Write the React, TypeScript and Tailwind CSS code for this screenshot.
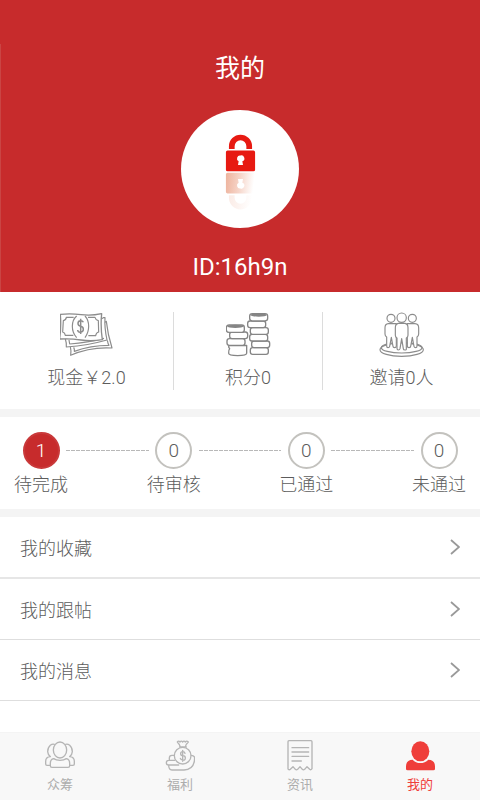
const stats = [
  { label: "现金￥2.0", icon: <CashIcon /> },
  { label: "积分0", icon: <CoinsIcon /> },
  { label: "邀请0人", icon: <PeopleIcon /> },
];

const steps = [
  { label: "待完成", count: 1, active: true },
  { label: "待审核", count: 0, active: false },
  { label: "已通过", count: 0, active: false },
  { label: "未通过", count: 0, active: false },
];

const rows = ["我的收藏", "我的跟帖", "我的消息"];

const tabs = [
  { label: "众筹", icon: <CrowdIcon />, active: false },
  { label: "福利", icon: <WelfareIcon />, active: false },
  { label: "资讯", icon: <NewsIcon />, active: false },
  { label: "我的", icon: <MineIcon />, active: true },
];

const shackle = "M207 327v-8a34 34 0 0 1 69 0v8h-17v-8a17 17 0 0 0-35 0v8z";
const lockBody =
  "M203 332h77q5 0 5 5v52q0 5-5 5h-77q-5 0-5-5v-52q0-5 5-5zM241 347a9 9 0 0 0-5 17l-2 11h15l-2-11a9 9 0 0 0-6-17z";

function LockIcon() {
  return (
    <svg viewBox="64 211 352 352" className="size-full" aria-hidden="true">
      <defs>
        <linearGradient id="reflection" x1="198" y1="380" x2="282" y2="370" gradientUnits="userSpaceOnUse">
          <stop offset="0" stopColor="#eeb49e" />
          <stop offset="0.5" stopColor="#f6d5c9" />
          <stop offset="1" stopColor="#ffffff" />
        </linearGradient>
      </defs>
      <g fill="#e71a12" fillRule="evenodd">
        <path d={shackle} />
        <path d={lockBody} />
      </g>
      <g fill="url(#reflection)" fillRule="evenodd" transform="translate(0 792) scale(1 -1)">
        <path d={shackle} opacity="0.3" />
        <path d={lockBody} />
      </g>
    </svg>
  );
}

function CashIcon() {
  return (
    <svg viewBox="60 38 162 135" className="h-[45px] w-[54px]" fill="none" stroke="#8c8c8c" strokeWidth="3.5" strokeLinejoin="round" aria-hidden="true">
      <path fill="#fff" d="M199 66q4 38 17 80-66-4-124 22 2-14-1-27z" />
      <path d="M101 144q3 5 2 12 48-18 104-18-3-4-5-15" />
      <path fill="#fff" d="M190 55h5q-2 30 6 67-56 16-122 21 1-12-3-24z" />
      <path d="M87 122l2 12q54-4 103-17" />
      <path fill="#fff" strokeWidth="4" d="M61 45q32-3 62 1t62-3q-4 37 2 78-32 6-64 1t-64-3q5-37 2-74z" />
      <path d="M101 54H79q-1 8-9 10l-2 34q7 2 8 10h24M144 54h21q2 8 10 10l1 34q-8 2-9 11h-22" />
      <path d="M110 50q-13 11-13 31t13 34M135 50q11 12 11 31t-11 34" />
      <path d="M130 69q-2-5-8-5-8 0-8 8t8 9 8 9-8 9-9-7M122 58v46" strokeWidth="4.5" />
    </svg>
  );
}

function Coin({ x, y }: { x: number; y: number }) {
  return <rect x={x} y={y} width="54" height="20" rx="7" fill="#fff" />;
}

function CoinsIcon() {
  return (
    <svg viewBox="48 37 135 135" className="size-[45px]" fill="none" stroke="#858585" strokeWidth="4" strokeLinejoin="round" aria-hidden="true">
      <Coin x={121} y={144} />
      <Coin x={125} y={124} />
      <Coin x={119} y={104} />
      <Coin x={121} y={84} />
      <Coin x={113} y={64} />
      <rect x="119" y="42" width="54" height="22" rx="8" fill="#fff" />
      <ellipse cx="146" cy="46" rx="24" ry="5" fill="#858585" stroke="none" />
      <path fill="#fff" d="M56 138q-1 5 3 9-4 5-3 14 0 7 27 7t27-7v-24z" />
      <Coin x={51} y={117} />
      <Coin x={59} y={97} />
      <rect x="49" y="76" width="54" height="22" rx="8" fill="#fff" />
      <ellipse cx="76" cy="80" rx="24" ry="5" fill="#858585" stroke="none" />
    </svg>
  );
}

function PeopleIcon() {
  return (
    <svg viewBox="87 35 135 135" className="size-[45px]" fill="none" stroke="#8c8c8c" strokeWidth="3.5" strokeLinejoin="round" aria-hidden="true">
      <ellipse cx="155" cy="148" rx="65" ry="20" />
      <ellipse cx="155" cy="142" rx="61" ry="16" />
      <g fill="#fff">
        <circle cx="123" cy="54" r="12" />
        <path d="M115 70q-10 1-10 12v19q0 6 5 9v27q0 5 4 5t5-4l5-27 5 27q0 4 5 4t5-5V70z" />
        <circle cx="187" cy="54" r="12" />
        <path d="M195 70q11 1 11 12v19q0 6-5 9v27q0 5-4 5t-5-4l-5-27-5 27q0 4-5 4t-5-5V70z" />
        <circle cx="155" cy="52" r="14" />
        <path d="M145 69q-9 2-9 13v23q0 6 5 8v31q0 5 4 5t5-4l5-30 5 30q0 4 5 4t4-5v-31q5-2 5-8V82q0-11-9-13z" />
      </g>
    </svg>
  );
}

function CrowdIcon() {
  return (
    <svg viewBox="135 46 90 93" className="h-[31px] w-[30px]" fill="none" stroke="#b5b5b5" strokeWidth="4" strokeLinejoin="round" strokeLinecap="round" aria-hidden="true">
      <ellipse cx="180" cy="76" rx="20" ry="24" />
      <path d="M161 102q7 5 19 5t19-5q10 2 10 14v7q0 5-5 5h-48q-5 0-5-5v-7q0-12 10-14z" />
      <path d="M163 59q-6-2-12 3-8 7-8 19 1 11 8 15-14 1-14 14v8q0 4 4 4h8M197 59q6-2 12 3 8 7 8 19-1 11-8 15 14 1 14 14v8q0 4-4 4h-8" />
    </svg>
  );
}

function WelfareIcon() {
  return (
    <svg viewBox="495 46 90 93" className="h-[31px] w-[30px]" fill="none" stroke="#b5b5b5" strokeWidth="4" strokeLinejoin="round" strokeLinecap="round" aria-hidden="true">
      <circle cx="548" cy="93" r="25" />
      <path d="M541 67q-3-9-9-15 4-5 8 0 4-5 8 0 4-5 8 0 4-5 9 0-7 6-9 15M539 67h20" />
      <path d="M555 86q-1-5-7-5-6 0-6 6t7 6 7 7-7 6-8-5M548 77v33" />
      <path d="M523 92h-7q-8 0-8 8v6M524 107h-18q-7 0-7 7t7 7h30M506 121q0 15 10 15h36q32-1 32-38-3-6-10-6" />
    </svg>
  );
}

function NewsIcon() {
  return (
    <svg viewBox="135 46 90 93" className="h-[31px] w-[30px]" fill="none" stroke="#b5b5b5" strokeWidth="4" strokeLinejoin="round" strokeLinecap="round" aria-hidden="true">
      <path d="M144 132V51q0-3 3-3h66q3 0 3 3v81q-3 5-7 2l-8-8-7 8q-4 3-7 0l-7-8-7 8q-4 3-7 0l-7-8-8 8q-5 3-7-2z" />
      <path d="M156 69h50M156 82h50M156 95h50M156 109h28" />
    </svg>
  );
}

function MineIcon() {
  return (
    <svg viewBox="495 46 90 93" className="h-[31px] w-[30px]" fill="#ef3e3a" aria-hidden="true">
      <ellipse cx="541" cy="80" rx="27" ry="30" />
      <path d="M518 105q9 10 23 10t24-10q20 1 20 20v8q0 4-5 4h-77q-5 0-5-4v-8q0-19 20-20z" />
    </svg>
  );
}

function Chevron() {
  return (
    <svg viewBox="0 0 10 16" className="h-4 w-[10px]" fill="none" stroke="#999" strokeWidth="1.8" aria-hidden="true">
      <path d="M1 1l8 7-8 7" />
    </svg>
  );
}

function Gap() {
  return <div className="h-2 bg-[#f4f4f4]" />;
}

export default function App() {
  return (
    <div className="flex min-h-screen flex-col bg-white font-[Roboto,'Noto_Sans_CJK_SC',sans-serif] text-[18px] leading-6 text-[#5c5c5c]">
      <header className="bg-[#c72b2c] pt-11 text-white">
        <div className="flex flex-col items-center pb-2 shadow-[inset_1px_0_#ca4544]">
          <h1 className="text-[25px] leading-[50px]">我的</h1>
          <button type="button" aria-label="头像" className="mt-4 size-[118px] rounded-full bg-white">
            <LockIcon />
          </button>
          <p className="mt-[22px] text-[24px] leading-[34px]">ID:16h9n</p>
        </div>
      </header>

      <section className="grid grid-cols-[174fr_149fr_157fr] pt-5 pb-[19px]">
        {stats.map((s, i) => (
          <button
            type="button"
            key={s.label}
            className={`flex h-[78px] flex-col items-center justify-between ${i < 2 ? "border-r border-[#dcdcdc]" : ""}`}
          >
            {s.icon}
            <span className="font-light">{s.label}</span>
          </button>
        ))}
      </section>

      <Gap />

      <ol className="flex px-4 pt-[15px] pb-3 font-light">
        {steps.map((s, i) => (
          <li key={s.label} className={`flex ${i > 0 ? "flex-1" : ""}`}>
            {i > 0 && (
              <span className="mt-[18px] h-px flex-1 bg-[repeating-linear-gradient(90deg,#b8b8b8_0_4px,transparent_4px_5px)]" />
            )}
            <button type="button" className="flex w-[50px] flex-col items-center">
              <span
                className={`flex size-[37px] items-center justify-center rounded-full border-2 text-[19px] ${
                  s.active ? "border-[#c9393a] bg-[#c72b2c] text-white" : "border-[#c3c2be]"
                }`}
              >
                {s.count}
              </span>
              <span className="mt-1 whitespace-nowrap">{s.label}</span>
            </button>
          </li>
        ))}
      </ol>

      <Gap />

      <ul>
        {rows.map((r) => (
          <li key={r} className="border-b border-[#dedede] first:border-b-2 first:border-[#e6e6e6]">
            <a href="#" className="flex h-[60px] items-center justify-between px-5 font-light">
              <span className="pt-[3px]">{r}</span>
              <Chevron />
            </a>
          </li>
        ))}
      </ul>

      <nav className="sticky bottom-0 mt-auto grid h-[68px] grid-cols-4 border-t border-[#f4f4f4] bg-[#f8f8f8] text-[13px] leading-5">
        {tabs.map((t) => (
          <a
            key={t.label}
            href="#"
            aria-current={t.active ? "page" : undefined}
            className={`flex flex-col items-center pt-[7px] ${t.active ? "text-[#ef3e3a]" : "text-[#adadad]"}`}
          >
            {t.icon}
            <span className="mt-1">{t.label}</span>
          </a>
        ))}
      </nav>
    </div>
  );
}
